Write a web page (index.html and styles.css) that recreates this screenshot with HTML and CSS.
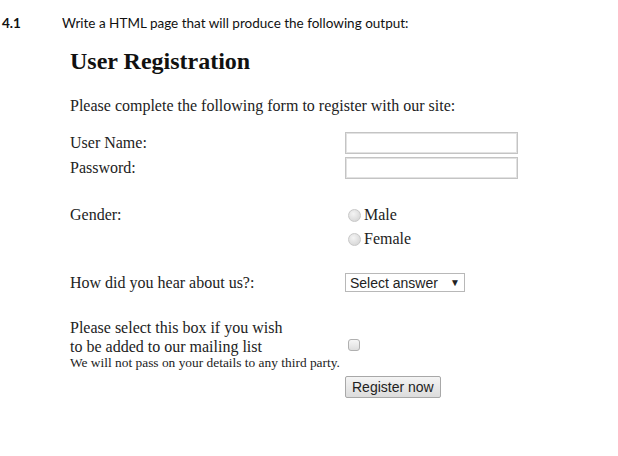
FILE: index.html
```html
<!DOCTYPE html>
<html lang="en">
<head>
  <meta charset="UTF-8">
  <meta name="viewport" content="width=device-width, initial-scale=1.0">
  <link rel="stylesheet" href="styles.css">
  <title>User Registration</title>
</head>
<body>
  <div class="task">
    <span class="task-num">4.1</span>
    <span class="task-text">Write a HTML page that will produce the following output:</span>
  </div>
  <div class="page">
    <h1>User Registration</h1>
    <p class="intro">Please complete the following form to register with our site:</p>
    <form class="reg">
      <div class="row row-name">
        <label for="user">User Name:</label>
        <input type="text" id="user" class="field">
      </div>
      <div class="row row-pass">
        <label for="pass">Password:</label>
        <input type="password" id="pass" class="field">
      </div>
      <div class="row row-gender">
        <span class="lbl">Gender:</span>
        <div class="radios">
          <label class="opt"><input type="radio" name="gender" class="radio">Male</label>
          <label class="opt"><input type="radio" name="gender" class="radio">Female</label>
        </div>
      </div>
      <div class="row row-hear">
        <label for="hear">How did you hear about us?:</label>
        <div class="select" id="hear">Select answer<span class="arrow">&#9660;</span></div>
      </div>
      <div class="row row-mail">
        <div class="mail-text">
          Please select this box if you wish<br>
          to be added to our mailing list<br>
          <small>We will not pass on your details to any third party.</small>
        </div>
        <div><input type="checkbox" class="check"></div>
      </div>
      <div class="row row-submit">
        <span></span>
        <div><button type="button" class="btn">Register now</button></div>
      </div>
    </form>
  </div>
</body>
</html>
```

FILE: styles.css
```css
body {
  margin: 0;
  background: #fff;
  color: #222;
  font-family: "Liberation Serif", "Times New Roman", serif;
}

.task {
  display: flex;
  padding: 14px 0 0 2px;
  font-family: Lato, "Open Sans", sans-serif;
  font-size: 13.5px;
  line-height: 18px;
  color: #111;
}

.task-num {
  width: 60px;
  font-weight: bold;
}

.page {
  padding-left: 70px;
}

.page h1 {
  margin: 0;
  margin-top: 15px;
  font-size: 24px;
  line-height: 28px;
  font-weight: bold;
  color: #111;
}

.intro {
  margin: 0;
  margin-top: 21px;
  font-size: 16px;
  line-height: 20px;
}

.reg {
  margin-top: 16px;
  font-size: 16px;
}

.row {
  display: grid;
  grid-template-columns: 275px auto;
  align-items: center;
}

.row-pass {
  margin-top: 3px;
}

.row-gender {
  margin-top: 24px;
  align-items: start;
}

.row-gender .lbl {
  line-height: 24px;
}

.row-hear {
  margin-top: 22px;
}

.row-mail {
  margin-top: 26px;
}

.row-submit {
  margin-top: 6px;
}

.field {
  box-sizing: border-box;
  width: 173px;
  height: 22px;
  margin: 0;
  border: 1px solid #c4c4c4;
  box-shadow: inset 0 0 0 1px #e2e2e2;
  background: #fff;
}

.radios {
  display: flex;
  flex-direction: column;
}

.opt {
  display: flex;
  align-items: center;
  height: 24px;
  margin-left: 3px;
}

.radio {
  appearance: none;
  width: 13px;
  height: 13px;
  margin: 0 3px 0 0;
  border-radius: 50%;
  border: 1px solid #c8c8c8;
  background: radial-gradient(circle at 40% 35%, #f4f4f4, #d0d0d0);
}

.select {
  box-sizing: border-box;
  display: flex;
  align-items: center;
  justify-content: space-between;
  width: 120px;
  height: 19px;
  padding: 0 4px 0 4px;
  border: 1px solid #b8b8b8;
  font-family: "Liberation Sans", Arial, sans-serif;
  font-size: 14px;
  color: #222;
}

.arrow {
  font-size: 10px;
}

.mail-text {
  line-height: 19px;
}

.mail-text small {
  display: block;
  font-size: 13.4px;
  line-height: 14px;
}

.check {
  appearance: none;
  width: 12px;
  height: 12px;
  margin: 0 0 0 3px;
  border: 1px solid #b0b0b0;
  border-radius: 3px;
  background: linear-gradient(#f6f6f6, #dedede);
  vertical-align: middle;
}

.btn {
  height: 22px;
  padding: 0 6px;
  margin: 0;
  border: 1px solid #a8a8a8;
  border-radius: 2px;
  background: linear-gradient(#f4f4f4, #dcdcdc);
  font-family: "Liberation Sans", Arial, sans-serif;
  font-size: 14px;
  color: #222;
}
```
